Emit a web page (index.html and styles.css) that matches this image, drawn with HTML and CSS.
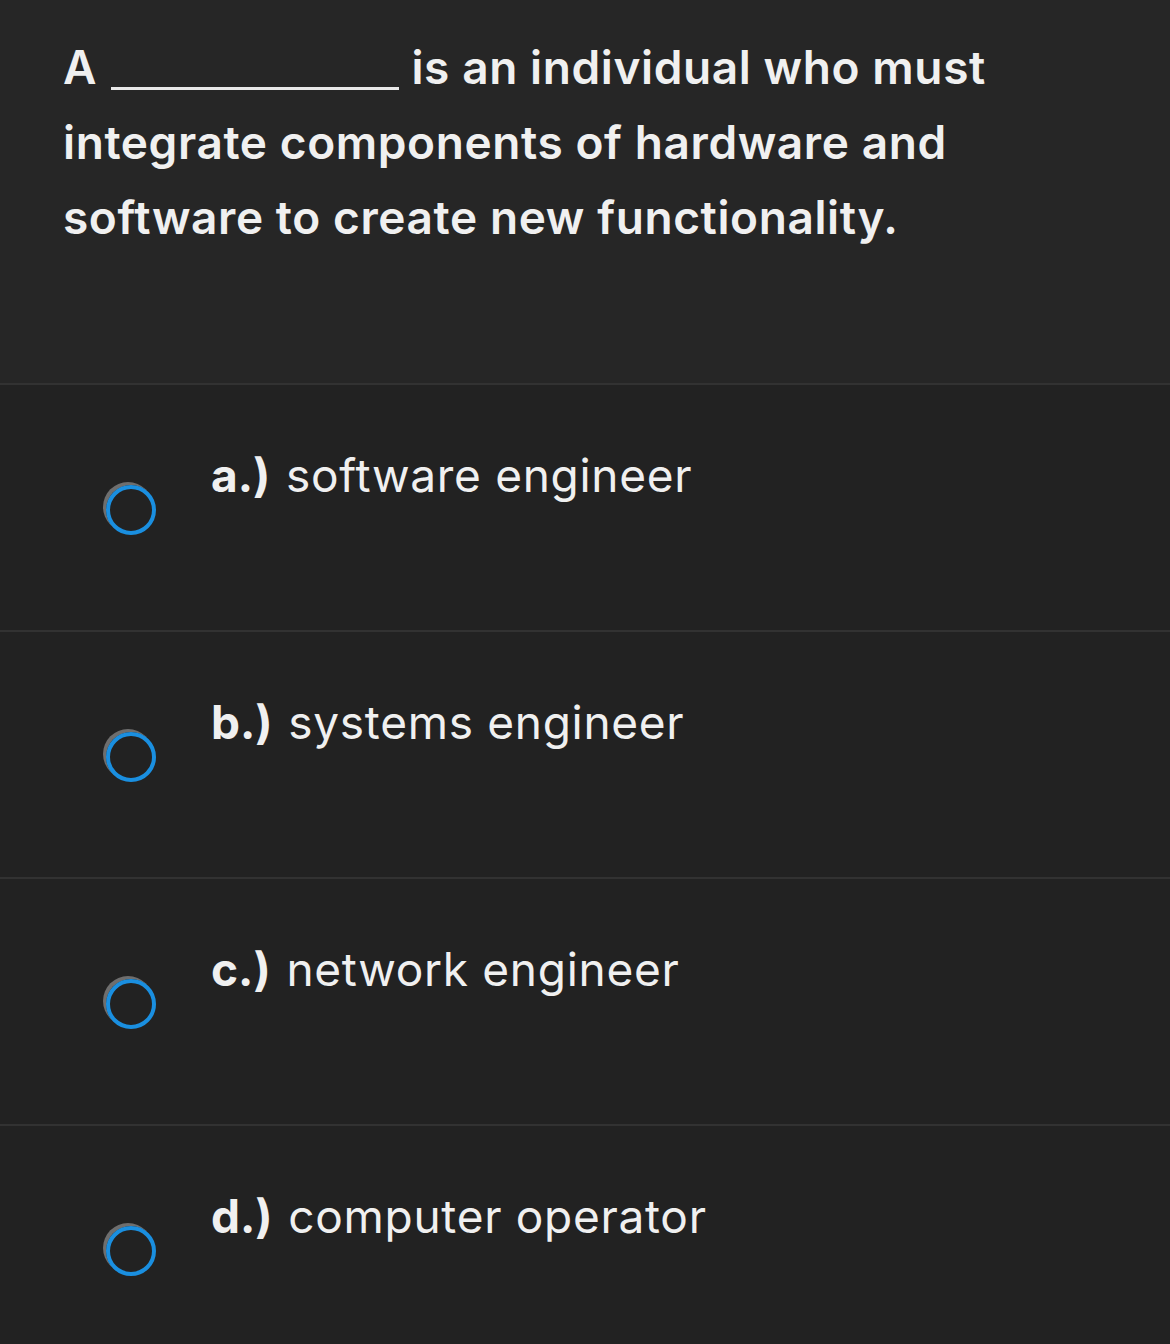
FILE: index.html
```html
<!DOCTYPE html>
<html>
<head>
  <title>Question</title>
  <link rel="stylesheet" href="styles.css">
</head>
<body>
  <div class="question">
    <p>A <span class="blank"></span> is an individual who must integrate components of hardware and software to create new functionality.</p>
  </div>
  <div class="answers">
    <div class="answer">
      <span class="radio"></span>
      <span class="label"><b>a.)</b> software engineer</span>
    </div>
    <div class="answer">
      <span class="radio"></span>
      <span class="label"><b>b.)</b> systems engineer</span>
    </div>
    <div class="answer">
      <span class="radio"></span>
      <span class="label"><b>c.)</b> network engineer</span>
    </div>
    <div class="answer">
      <span class="radio"></span>
      <span class="label"><b>d.)</b> computer operator</span>
    </div>
  </div>
</body>
</html>
```

FILE: styles.css
```css
body {
  margin: 0;
  background: #222222;
  color: #f0f0f0;
  font-family: Inter, "Open Sans", sans-serif;
}

.question {
  background: #262626;
  padding: 30px 63px 0 63px;
  height: 353px;
  border-bottom: 2px solid #323232;
}

.question p {
  margin: 0;
  font-size: 46px;
  font-weight: 600;
  line-height: 75px;
  letter-spacing: 0.6px;
  max-width: 960px;
}

.blank {
  display: inline-block;
  width: 288px;
  height: 3px;
  background: #e8e8e8;
  vertical-align: -6px;
  margin: 0 0 0 2px;
}

.answer {
  height: 245px;
  border-bottom: 2px solid #323232;
  display: flex;
  align-items: flex-start;
  padding-left: 106px;
}

.radio {
  width: 42px;
  height: 42px;
  margin-top: 100px;
  border: 4px solid #1a8fe0;
  border-radius: 50%;
  box-shadow: -3px -3px 0 0 #6e6e6e;
  flex-shrink: 0;
}

.label {
  margin-left: 55px;
  margin-top: 60px;
  font-size: 46px;
  line-height: 60px;
  font-weight: 400;
  letter-spacing: 0.7px;
}

.label b {
  font-weight: 700;
  letter-spacing: 0;
  margin-right: 2px;
}
```
